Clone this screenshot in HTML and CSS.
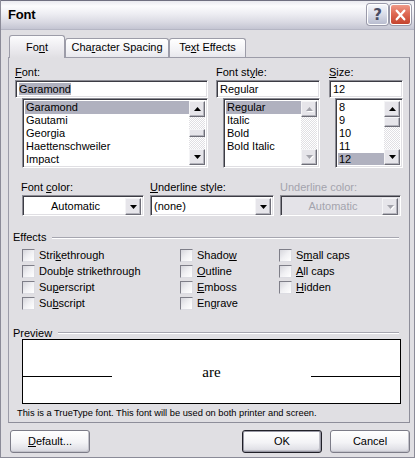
FILE: index.html
```html
<!DOCTYPE html>
<html>
<head>
<meta charset="utf-8">
<title>Font</title>
<link rel="stylesheet" href="styles.css">
</head>
<body>
<div class="window">
  <div class="titlebar">
    <span class="title">Font</span>
    <div class="caption-btns">
      <span class="cbtn help">?</span>
      <span class="cbtn close"><svg viewBox="0 0 20 20" width="20" height="20"><path d="M6 5.5 L14 14.5 M14 5.5 L6 14.5" stroke="#fff" stroke-width="2.4" stroke-linecap="round"/></svg></span>
    </div>
  </div>
  <div class="client">
    <div class="tabs">
      <div class="tab active tab-font">Fo<u>n</u>t</div>
      <div class="tab tab-spacing">Cha<u>r</u>acter Spacing</div>
      <div class="tab tab-effects">Te<u>x</u>t Effects</div>
    </div>
    <div class="panel">
      <div class="row1">
        <div class="col col-font">
          <div class="lbl"><u>F</u>ont:</div>
          <div class="field"><span class="hl">Garamond</span></div>
          <div class="list list-font">
            <div class="items">
              <div class="item selected">Garamond</div>
              <div class="item">Gautami</div>
              <div class="item">Georgia</div>
              <div class="item">Haettenschweiler</div>
              <div class="item">Impact</div>
            </div>
            <div class="sbar">
              <div class="sbtn"><svg width="7" height="4" viewBox="0 0 7 4"><path d="M3.5 0L7 4H0z"/></svg></div>
              <div class="track"><div class="thumb thumb-font"></div></div>
              <div class="sbtn"><svg width="7" height="4" viewBox="0 0 7 4"><path d="M0 0h7L3.5 4z"/></svg></div>
            </div>
          </div>
        </div>
        <div class="col col-style">
          <div class="lbl">Font st<u>y</u>le:</div>
          <div class="field">Regular</div>
          <div class="list list-style">
            <div class="items">
              <div class="item selected">Regular</div>
              <div class="item">Italic</div>
              <div class="item">Bold</div>
              <div class="item">Bold Italic</div>
            </div>
            <div class="sbar disabled">
              <div class="sbtn"><svg width="7" height="4" viewBox="0 0 7 4"><path d="M3.5 0L7 4H0z"/></svg></div>
              <div class="track"></div>
              <div class="sbtn"><svg width="7" height="4" viewBox="0 0 7 4"><path d="M0 0h7L3.5 4z"/></svg></div>
            </div>
          </div>
        </div>
        <div class="col col-size">
          <div class="lbl"><u>S</u>ize:</div>
          <div class="field">12</div>
          <div class="list list-size">
            <div class="items">
              <div class="item">8</div>
              <div class="item">9</div>
              <div class="item">10</div>
              <div class="item">11</div>
              <div class="item selected">12</div>
            </div>
            <div class="sbar">
              <div class="sbtn"><svg width="7" height="4" viewBox="0 0 7 4"><path d="M3.5 0L7 4H0z"/></svg></div>
              <div class="track"><div class="thumb thumb-size"></div></div>
              <div class="sbtn"><svg width="7" height="4" viewBox="0 0 7 4"><path d="M0 0h7L3.5 4z"/></svg></div>
            </div>
          </div>
        </div>
      </div>

      <div class="row2">
        <div class="ccol">
          <div class="lbl lbl-first">Font <u>c</u>olor:</div>
          <div class="combo">
            <div class="ctext center">Automatic</div>
            <div class="dbtn"><svg width="7" height="4" viewBox="0 0 7 4"><path d="M0 0h7L3.5 4z"/></svg></div>
          </div>
        </div>
        <div class="ccol">
          <div class="lbl"><u>U</u>nderline style:</div>
          <div class="combo">
            <div class="ctext">(none)</div>
            <div class="dbtn"><svg width="7" height="4" viewBox="0 0 7 4"><path d="M0 0h7L3.5 4z"/></svg></div>
          </div>
        </div>
        <div class="ccol">
          <div class="lbl disabled-text">Underline color:</div>
          <div class="combo disabled">
            <div class="ctext center">Automatic</div>
            <div class="dbtn"><svg width="7" height="4" viewBox="0 0 7 4"><path d="M0 0h7L3.5 4z"/></svg></div>
          </div>
        </div>
      </div>

      <div class="group-head effects-head"><span>Effects</span><div class="etch"></div></div>
      <div class="checks">
        <div class="chk"><span class="box"></span><span class="ctl">Stri<u>k</u>ethrough</span></div>
        <div class="chk"><span class="box"></span><span class="ctl">Doub<u>l</u>e strikethrough</span></div>
        <div class="chk"><span class="box"></span><span class="ctl">Su<u>p</u>erscript</span></div>
        <div class="chk"><span class="box"></span><span class="ctl">Su<u>b</u>script</span></div>
        <div class="chk"><span class="box"></span><span class="ctl">Shado<u>w</u></span></div>
        <div class="chk"><span class="box"></span><span class="ctl"><u>O</u>utline</span></div>
        <div class="chk"><span class="box"></span><span class="ctl"><u>E</u>mboss</span></div>
        <div class="chk"><span class="box"></span><span class="ctl">En<u>g</u>rave</span></div>
        <div class="chk"><span class="box"></span><span class="ctl">S<u>m</u>all caps</span></div>
        <div class="chk"><span class="box"></span><span class="ctl"><u>A</u>ll caps</span></div>
        <div class="chk"><span class="box"></span><span class="ctl"><u>H</u>idden</span></div>
      </div>

      <div class="group-head preview-head"><span>Preview</span><div class="etch"></div></div>
      <div class="preview">
        <div class="pline"></div>
        <div class="ptext">are</div>
        <div class="pline"></div>
      </div>
      <div class="info">This is a TrueType font. This font will be used on both printer and screen.</div>
    </div>

    <div class="buttons">
      <div class="btn"><u>D</u>efault...</div>
      <div class="spacer"></div>
      <div class="btn default">OK</div>
      <div class="btn">Cancel</div>
    </div>
  </div>
</div>
</body>
</html>
```

FILE: styles.css
```css
* { box-sizing: border-box; }
html, body { margin: 0; padding: 0; }
body {
  background: #fff;
  font-family: "Liberation Sans", Arial, sans-serif;
  font-size: 11px;
  color: #000;
}
u { text-decoration: underline; text-underline-offset: 1px; }

.window {
  width: 415px;
  height: 458px;
  background: #e0dfe3;
  border: 1px solid #8b8b98;
  border-top: 0;
  display: flex;
  flex-direction: column;
}

/* title bar */
.titlebar {
  height: 30px;
  flex: none;
  border-top: 1px solid #6f6f80;
  background: linear-gradient(180deg, #e9e9ef 0%, #fbfbfd 18%, #eeeef3 45%, #dadae3 75%, #c4c5d2 100%);
  display: flex;
  align-items: center;
  justify-content: space-between;
  padding: 0 3px 0 7px;
  border-bottom: 1px solid #b5b6c4;
}
.title {
  font-weight: bold;
  font-size: 13px;
  letter-spacing: -0.2px;
  margin-top: -1px;
}
.caption-btns { display: flex; gap: 2px; margin-top: -1px; }
.cbtn {
  width: 21px;
  height: 21px;
  border-radius: 3px;
  border: 1px solid #fff;
  display: flex;
  align-items: center;
  justify-content: center;
  box-shadow: 0 0 0 1px #9a9aaa;
}
.help {
  background: linear-gradient(180deg, #f4f5fa 0%, #dcdfea 45%, #b9bdd0 100%);
  color: #4a4c62;
  font-weight: bold;
  font-size: 15px;
  font-family: "DejaVu Sans", sans-serif;
}
.close {
  background: linear-gradient(180deg, #ef9a88 0%, #df6a55 45%, #c4432e 100%);
}

/* client area */
.client {
  flex: 1;
  padding: 5px 4px 0 7px;
  display: flex;
  flex-direction: column;
}

.tabs {
  display: flex;
  align-items: flex-end;
  height: 22px;
  padding-left: 1px;
  position: relative;
  z-index: 1;
}
.tab {
  height: 19px;
  border: 1px solid #9c9ca8;
  border-bottom: 0;
  border-radius: 3px 3px 0 0;
  background: linear-gradient(180deg, #ffffff 0%, #f3f3f6 60%, #e8e8ed 100%);
  text-align: center;
  padding-top: 2px;
  line-height: 13px;
  white-space: nowrap;
}
.tab.active {
  height: 23px;
  margin-bottom: -1px;
  background: linear-gradient(180deg, #fcfcfd 0%, #eeedf1 50%, #e0dfe3 100%);
  padding-top: 5px;
  border-color: #9c9ca8;
}
.tab-font { width: 56px; }
.tab-spacing { width: 104px; }
.tab-effects { width: 77px; }

.panel {
  width: 402px;
  height: 366px;
  border: 1px solid #9c9ca8;
  border-right-color: #8e8e9a;
  border-bottom-color: #8e8e9a;
  background: #e0dfe3;
  display: flex;
  flex-direction: column;
}

.lbl {
  height: 13px;
  line-height: 13px;
  white-space: nowrap;
}

/* row 1: font / style / size */
.row1 {
  display: flex;
  margin: 8px 0 0 6px;
}
.col { display: flex; flex-direction: column; }
.col-font { width: 193px; }
.col-style { width: 104px; margin-left: 8px; }
.col-size { width: 74px; margin-left: 9px; }
.col .lbl { margin-bottom: 1px; }

.field {
  height: 18px;
  background: #fff;
  border: 1px solid;
  border-color: #8c8c94 #fff #fff #8c8c94;
  box-shadow: inset 1px 1px 0 #3c3c44, inset -1px -1px 0 #e0dfe3;
  padding: 2px 0 0 3px;
  line-height: 13px;
  white-space: nowrap;
}
.hl { background: #b0b1bf; }

.list {
  height: 70px;
  display: flex;
  background: #fff;
  border: 1px solid;
  border-color: #8c8c94 #fff #fff #8c8c94;
  box-shadow: inset 1px 1px 0 #3c3c44, inset -1px -1px 0 #e0dfe3;
  padding: 2px 2px 2px 2px;
}
.list-font { margin-left: 7px; }
.list-style { margin-left: 7px; }
.list-size { margin-left: 6px; }
.items { flex: 1; overflow: hidden; }
.item {
  height: 13px;
  line-height: 13px;
  padding-left: 1px;
  white-space: nowrap;
}
.item.selected { background: #b0b1bf; }

.sbar {
  width: 16px;
  display: flex;
  flex-direction: column;
}
.sbtn {
  width: 16px;
  height: 16px;
  flex: none;
  background: #e6e5ea;
  border: 1px solid;
  border-color: #f4f4f6 #6e6e78 #6e6e78 #f4f4f6;
  box-shadow: inset -1px -1px 0 #b4b4bc;
  display: flex;
  align-items: center;
  justify-content: center;
}
.sbtn svg { fill: #000; display: block; }
.sbar.disabled .sbtn svg { fill: #a4a4ac; filter: drop-shadow(1px 1px 0 #fff); }
.track {
  flex: 1;
  background: repeating-conic-gradient(#e0dfe3 0 25%, #ffffff 0 50%) 0 0 / 2px 2px;
  position: relative;
}
.thumb {
  width: 16px;
  background: #e6e5ea;
  border: 1px solid;
  border-color: #f4f4f6 #6e6e78 #6e6e78 #f4f4f6;
  box-shadow: inset -1px -1px 0 #b4b4bc;
}
.thumb-font { margin-top: 12px; height: 8px; }
.thumb-size { margin-top: 0; height: 10px; }

/* row 2: combos */
.row2 {
  display: grid;
  grid-template-columns: 122px 124px 121px;
  column-gap: 6px;
  margin: 13px 0 0 13px;
}
.ccol { display: flex; flex-direction: column; }
.ccol .lbl { margin-bottom: 1px; }
.lbl-first { margin-left: -1px; }
.disabled-text { color: #a3a3ad; }

.combo {
  height: 21px;
  display: flex;
  background: #fff;
  border: 1px solid;
  border-color: #8c8c94 #fff #fff #8c8c94;
  box-shadow: inset 1px 1px 0 #3c3c44, inset -1px -1px 0 #e0dfe3;
  padding: 2px;
}
.ctext {
  flex: 1;
  line-height: 17px;
  padding-left: 1px;
  white-space: nowrap;
}
.ctext.center { text-align: center; }
.dbtn {
  width: 16px;
  height: 17px;
  background: #e6e5ea;
  border: 1px solid;
  border-color: #f4f4f6 #6e6e78 #6e6e78 #f4f4f6;
  box-shadow: inset -1px -1px 0 #b4b4bc;
  display: flex;
  align-items: center;
  justify-content: center;
}
.dbtn svg { fill: #000; display: block; }
.combo.disabled { background: #e4e3e8; color: #a3a3ad; }
.combo.disabled .dbtn svg { fill: #a4a4ac; filter: drop-shadow(1px 1px 0 #fff); }

/* group headers */
.group-head {
  display: flex;
  align-items: center;
  height: 13px;
  line-height: 13px;
  margin: 0 10px 0 4px;
}
.effects-head { margin-top: 15px; }
.preview-head { margin-top: 16px; height: 12px; line-height: 12px; }
.etch {
  flex: 1;
  height: 2px;
  margin-left: 6px;
  border-top: 1px solid #a6a6b0;
  border-bottom: 1px solid #fff;
}

/* checkboxes */
.checks {
  display: grid;
  grid-template-columns: 158px 99px 1fr;
  grid-template-rows: repeat(4, 16px);
  grid-auto-flow: column;
  margin-top: 3px;
  padding-left: 13px;
}
.chk {
  display: flex;
  align-items: center;
  gap: 3px;
  white-space: nowrap;
}
.box {
  width: 13px;
  height: 13px;
  flex: none;
  border: 1px solid;
  border-color: #7e7e88 #dcdce2 #dcdce2 #7e7e88;
  background: linear-gradient(135deg, #d6d6dc 0%, #f0f0f3 50%, #ffffff 100%);
  margin-right: 1px;
}

/* preview */
.preview {
  height: 65px;
  margin: 0 8px 0 13px;
  border: 1px solid #000;
  background: #fff;
  display: flex;
  align-items: center;
  justify-content: space-between;
}
.pline {
  width: 89px;
  height: 1px;
  background: #000;
  margin-top: 9px;
}
.ptext {
  font-family: "Liberation Serif", "Times New Roman", serif;
  font-size: 15px;
  line-height: 16px;
}
.info {
  margin-top: 3px;
  padding-left: 8px;
  font-size: 9.3px;
  line-height: 12px;
  white-space: nowrap;
}

/* buttons */
.buttons {
  display: flex;
  margin-top: 7px;
  height: 23px;
}
.spacer { flex: 1; }
.btn {
  width: 80px;
  height: 23px;
  border: 1px solid #7c7c88;
  border-radius: 3px;
  background: linear-gradient(180deg, #ffffff 0%, #f3f3f6 55%, #e2e2e8 85%, #d2d2da 100%);
  box-shadow: inset -1px -1px 0 #c2c2ca;
  text-align: center;
  line-height: 21px;
  margin-left: 2px;
}
.btn.default {
  border-color: #202028;
  box-shadow: inset 0 0 0 1px #9898a4, inset -2px -2px 0 #c2c2ca;
  margin-right: 8px;
}
.buttons .btn:last-child { margin-left: 0; }
```
